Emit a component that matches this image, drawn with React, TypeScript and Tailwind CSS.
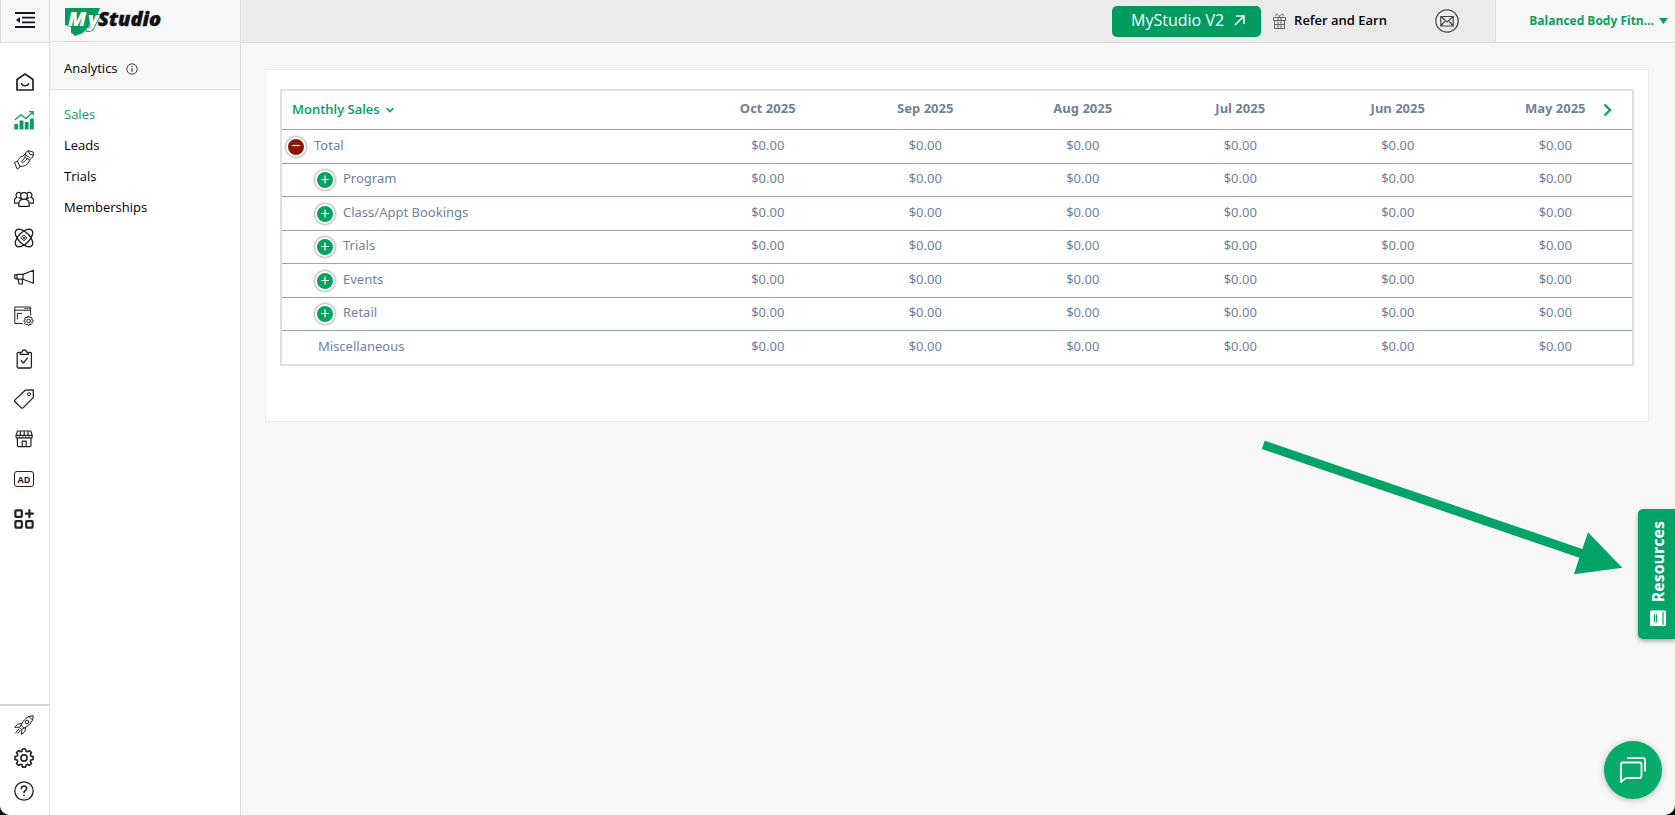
import type { ReactNode } from "react";

const months = ["Oct 2025", "Sep 2025", "Aug 2025", "Jul 2025", "Jun 2025", "May 2025"];

type Row = { label: string; kind: "total" | "group" | "leaf" };

const rows: Row[] = [
  { label: "Total", kind: "total" },
  { label: "Program", kind: "group" },
  { label: "Class/Appt Bookings", kind: "group" },
  { label: "Trials", kind: "group" },
  { label: "Events", kind: "group" },
  { label: "Retail", kind: "group" },
  { label: "Miscellaneous", kind: "leaf" },
];

const menu = ["Sales", "Leads", "Trials", "Memberships"];

function Icon({ children, width = 1.2 }: { children: ReactNode; width?: number }) {
  return (
    <svg
      viewBox="0 0 20 20"
      className="size-5"
      fill="none"
      stroke="currentColor"
      strokeWidth={width}
      strokeLinecap="round"
      strokeLinejoin="round"
      aria-hidden="true"
    >
      {children}
    </svg>
  );
}

const HomeIcon = (
  <Icon width={1.7}>
    <path d="M3 18V7.500L11 2l8 5.500V18Z" />
    <path d="M7.500 11.800c1.500 2.600 5.500 2.600 7 0" />
  </Icon>
);

const ChartIcon = (
  <svg viewBox="0 0 20 20" className="size-5 text-[#0a9d5f]" fill="currentColor" aria-hidden="true">
    <rect x="0.3" y="13" width="3.8" height="5.500" rx="0.6" />
    <rect x="5.500" y="9.500" width="4" height="9" rx="0.6" />
    <rect x="10.800" y="11" width="3.800" height="7.500" rx="0.6" />
    <rect x="16" y="7.500" width="3.800" height="11" rx="0.6" />
    <path d="M0.8 9 7 3.800l5 3.800 6.800-6.600M15 .6h4.200v4" fill="none" stroke="currentColor" strokeWidth="1.200" />
  </svg>
);

const HandIcon = (
  <Icon width={1}>
    <path d="m0.8 12.400 2.600-1.200 2.800 5.600-2.600 2.200ZM3.600 11.400c1-3 2.600-4.800 5-5.200l3.400-3M6 16.400c4.200.2 6.200-1 8.200-3.400l1.600-3.200" />
    <path d="m12 2.400 2.400-1.800 5 1.600-.4 4.600-3.400 3-4.400-2.400ZM14.400.8l1.200 3.200 3.600 1.200M11.200 7.400l-3.800 4.200c.8 1.200 2.400.6 4.200-1.200l1.600-1.600M12.400 5.400l3 2" />
  </Icon>
);

const GroupIcon = (
  <Icon width={1.3}>
    <circle cx="10" cy="7" r="3.400" />
    <path d="M4.800 17.400v-2.600c0-2.400 1.600-3.800 3.400-4.400M15.200 17.400v-2.600c0-2.400-1.600-3.800-3.400-4.400M4.800 17.400h10.400" />
    <path d="M6.600 4a2.700 2.700 0 1 0-3.600 4.200C1.400 9 .4 10.400.4 12v2.200h3.800M13.400 4a2.700 2.700 0 1 1 3.600 4.200c1.600.8 2.600 2.200 2.600 3.800v2.200h-3.800M5 8.600c.6.200 1 .6 1.400 1M15 8.600c-.6.200-1 .6-1.400 1" />
  </Icon>
);

const AtomIcon = (
  <Icon width={1.3}>
    <ellipse cx="10" cy="10" rx="11" ry="5.600" transform="rotate(45 10 10)" />
    <ellipse cx="10" cy="10" rx="11" ry="5.600" transform="rotate(-45 10 10)" />
    <path d="m10 7.200 2.800 2.800-2.800 2.800L7.200 10ZM10 9v2M9 10h2" strokeWidth="1" />
  </Icon>
);

const MegaphoneIcon = (
  <Icon width={1.2}>
    <path d="M3 7.400h6l10.400-4.200v13L9 12.200H3ZM3 7.800H.8v3.800H3M9 7.400v4.800M4.200 12.400l.8 4.600h3.400v-4.600" />
  </Icon>
);

const BrowserIcon = (
  <Icon width={1}>
    <path d="M8.400 17.400H.8V1h15.800v7.800M.8 4.200h15.800M3.400 13V7.400h4.200M11 2.600h.6M13 2.600h.6M15 2.600h.4" />
    <circle cx="14.600" cy="15" r="1.800" />
    <path d="m14 10.400h1.200l.5 1.300 1.500-.6 1 1-.6 1.400 1.400.6v1.500l-1.400.6.6 1.400-1 1-1.500-.6-.5 1.300h-1.200l-.6-1.300-1.500.6-1-1 .6-1.400-1.400-.6v-1.500l1.400-.6-.6-1.400 1-1 1.500.6Z" />
  </Icon>
);

const ClipboardIcon = (
  <Icon width={1.3}>
    <path d="M6.200 3.400H4.400c-.8 0-1.200.4-1.200 1.200v13.200c0 .8.4 1.200 1.200 1.200h11.800c.8 0 1.200-.4 1.200-1.200V4.600c0-.8-.4-1.200-1.200-1.200h-1.800" />
    <path d="M6.200 5.400c0-1.800.6-2.600 2-2.600.4-2.400 3.800-2.400 4.200 0 1.400 0 2 .8 2 2.600ZM7.200 11.800l2.200 2.200 4-4.800" />
  </Icon>
);

const TagIcon = (
  <Icon width={1.3}>
    <path d="M11.200 1.200 19.200.8l.2 7.600-10 10.200c-.8.8-1.600.8-2.400 0L1.200 13c-.8-.8-.8-1.600 0-2.400Z" />
    <circle cx="15" cy="5.200" r="1.500" strokeWidth="1" />
  </Icon>
);

const StoreIcon = (
  <Icon width={1.2}>
    <path d="M3.600 2h13.200l1.400 4.400v1.400c0 1-.8 1.400-1.600 1.400s-1.600-.4-1.600-1.400c0 1-.8 1.400-1.600 1.400s-1.600-.4-1.600-1.400c0 1-.8 1.400-1.600 1.400s-1.600-.4-1.600-1.400c0 1-.8 1.400-1.600 1.400s-1.600-.4-1.600-1.400c0 1-.8 1.400-1.600 1.400S2 8.800 2 7.800V6.400ZM2.200 6.400h16M6.400 2.200v3.800M10.200 2.200v3.800M14 2.200v3.800M3.400 9.600v6.800c0 .8.4 1.200 1.200 1.200h11.200c.8 0 1.200-.4 1.200-1.200V9.600M8.200 17.400V12.200h4v5.200" />
  </Icon>
);

const AdIcon = (
  <span className="flex h-4 w-5 items-center justify-center rounded-[3px] border border-[#222] text-[9px] font-bold leading-none">
    AD
  </span>
);

const AppsIcon = (
  <Icon width={2.2}>
    <rect x="1.400" y="1.400" width="6.400" height="6.400" rx="0.800" />
    <rect x="1.400" y="12.200" width="6.400" height="6.400" rx="0.800" />
    <rect x="12.200" y="12.200" width="6.400" height="6.400" rx="0.800" />
    <path d="M15.400 1.200v7M11.900 4.700h7" />
  </Icon>
);

const RocketIcon = (
  <Icon width={1}>
    <path d="M7.200 9.800C9.400 5 13 1.200 19.200.8c-.2 6.200-4 9.800-9 12.200ZM15.200 1.800l3 3M7.800 8.600l-4 .4L.8 12.400l4.400-.2M11.600 12.400l-.6 4-3.400 3 .2-4.600M7.200 9.800l-1.600 3 1.800 1.800 2.800-1.600M4.800 14.200 1.600 18M6 15.600l-2 2.600" />
    <circle cx="13" cy="7" r="1.800" />
  </Icon>
);

const GearIcon = (
  <Icon width={1.6}>
    <circle cx="10" cy="10" r="3.100" />
    <path d="M8.500 1h3l.6 2.300 1.300.5 2.100-1.200 2 2-1.200 2.100.6 1.400 2.200.5v2.900l-2.300.6-.5 1.300 1.200 2.100-2 2-2.100-1.200-1.300.6-.6 2.200h-3l-.6-2.300-1.300-.5-2.100 1.200-2-2 1.200-2.100-.6-1.300L1 11.500v-3l2.200-.5.6-1.400-1.300-2.100 2.100-2 2.100 1.200 1.200-.5Z" />
  </Icon>
);

const HelpIcon = (
  <Icon width={1.3}>
    <circle cx="10" cy="10" r="9.200" />
    <path d="M7.400 7.600c0-3.400 5.200-3.400 5.200-.2 0 2-2.600 2-2.600 4.200M10 14.400v.4" strokeWidth="1.600" />
  </Icon>
);

const railTop: [string, ReactNode][] = [
  ["Home", HomeIcon],
  ["Analytics", ChartIcon],
  ["Payments", HandIcon],
  ["Customers", GroupIcon],
  ["Programs", AtomIcon],
  ["Marketing", MegaphoneIcon],
  ["Website", BrowserIcon],
];

const railMiddle: [string, ReactNode][] = [
  ["Tasks", ClipboardIcon],
  ["Offers", TagIcon],
  ["Retail", StoreIcon],
  ["Ads", AdIcon],
  ["Apps", AppsIcon],
];

const railBottom: [string, ReactNode][] = [
  ["Launch", RocketIcon],
  ["Settings", GearIcon],
  ["Help", HelpIcon],
];

function Logo() {
  return (
    <svg viewBox="0 -4 110 38" className="h-[38px] w-[110px] shrink-0" role="img" aria-label="MyStudio">
      <path d="M1 1h35l-3 8-7 6c-1 5-4 9-8 11.500L11 29l-4-3.500V20L1 18Z" fill="#079a5c" />
      <g fontFamily="'Open Sans', 'Noto Sans', sans-serif" fontWeight="800" fontStyle="italic">
        <text x="4" y="19" fontSize="20" fill="#fff">M</text>
        <text x="24" y="19" fontSize="20" fill="#fff" stroke="#079a5c" strokeWidth="2" paintOrder="stroke">y</text>
        <text x="34" y="19" fontSize="20" fill="#111" stroke="#111" strokeWidth="0.4">Studio</text>
      </g>
    </svg>
  );
}

function Toggle({ open, label }: { open: boolean; label: string }) {
  return (
    <button
      type="button"
      aria-label={(open ? "Collapse " : "Expand ") + label}
      className={
        "flex size-5 items-center justify-center rounded-full border-2 border-white shadow-[0_0_2px_1px_#b5b5b5] " +
        (open ? "bg-[#8b1503]" : "bg-[#06a261]")
      }
    >
      <svg viewBox="0 0 10 10" className="size-[10px]" stroke="#fff" strokeWidth="1.2" aria-hidden="true">
        <path d={open ? "M1 3.500h8" : "M1 4.500h8M5 .5v8"} />
      </svg>
    </button>
  );
}

function RailLink({ label, children, height }: { label: string; children: ReactNode; height: string }) {
  return (
    <a href="#" aria-label={label} className={"flex items-center justify-center pr-px text-[#222] " + height}>
      {children}
    </a>
  );
}

export default function App() {
  return (
    <div className="min-h-screen bg-black font-['Open_Sans','Noto_Sans',sans-serif]">
      <div className="relative flex min-h-screen overflow-hidden rounded-b-[10px] bg-[#f7f7f7]">
        <nav aria-label="Main" className="flex w-[50px] shrink-0 flex-col border-r border-[#dcdee2] bg-white">
          <button
            type="button"
            aria-label="Toggle menu"
            className="flex h-[43px] items-center justify-center border-b border-l border-[#dcdee2] bg-[#f7f7f7] pb-[3px]"
          >
            <svg viewBox="0 0 20 16" className="h-4 w-5" stroke="#161a26" strokeWidth="1.8" aria-hidden="true">
              <path d="M0 1h20M7 5.700h13M7 10.300h13M0 15h20" />
              <path d="M1 8l4-3v6Z" fill="#161a26" stroke="none" />
            </svg>
          </button>
          <div className="flex flex-col pt-[19px]">
            {railTop.map(([label, icon]) => (
              <RailLink key={label} label={label} height="h-[39px]">{icon}</RailLink>
            ))}
          </div>
          <div className="flex flex-col pt-1">
            {railMiddle.map(([label, icon]) => (
              <RailLink key={label} label={label} height="h-10">{icon}</RailLink>
            ))}
          </div>
          <div className="mt-auto flex flex-col border-t-2 border-[#d6d6d6] pt-[2px] pb-2">
            {railBottom.map(([label, icon]) => (
              <RailLink key={label} label={label} height="h-[33px]">{icon}</RailLink>
            ))}
          </div>
        </nav>

        <aside className="flex w-[191px] shrink-0 flex-col border-r border-[#dcdee2] bg-white">
          <div className="flex h-[42px] items-center border-b border-[#dcdee2] bg-[#f7f7f7] pt-[3px] pl-[14px]">
            <Logo />
          </div>
          <h1 className="flex h-12 items-center gap-2 border-b border-[#dcdee2] bg-[#f7f7f7] pt-[6px] pl-[14px] text-[13px] text-black">
            Analytics
            <svg viewBox="0 0 12 12" className="size-3" fill="none" stroke="#444" aria-hidden="true">
              <circle cx="6" cy="6" r="5.200" />
              <path d="M6 5.200v3.500M6 3v1.200" strokeWidth="1.2" />
            </svg>
          </h1>
          <ul className="flex flex-col gap-[11px] pt-[14px] pl-[14px] text-[13px] leading-5">
            {menu.map((item, i) => (
              <li key={item}>
                <a href="#" className={i === 0 ? "text-[#0a9d5f]" : "text-black"}>{item}</a>
              </li>
            ))}
          </ul>
        </aside>

        <div className="flex min-w-0 grow flex-col">
          <header className="flex h-[43px] items-stretch justify-end border-b border-[#dcdee2] bg-[#ebebeb]">
            <div className="flex items-center">
              <button
                type="button"
                className="flex h-[31px] items-center gap-[10px] rounded-[5px] bg-[#009b5f] pr-4 pb-[2px] pl-[19px] text-base font-medium text-white"
              >
                MyStudio V2
                <svg viewBox="0 0 11 11" className="size-[11px]" fill="none" stroke="#e6fff4" strokeWidth="1.6" aria-hidden="true">
                  <path d="M1 10 10 1M2 1h8v8" />
                </svg>
              </button>
              <a href="#" className="ml-3 flex items-center gap-2 text-[13px] font-semibold text-black">
                <svg viewBox="0 0 13 16" className="h-4 w-[13px]" fill="none" stroke="#666" aria-hidden="true">
                  <path d="M.5 4.500h12v3H.5ZM1.500 7.500v8h10v-8M5 4.500v11M8 4.500v11M6.500 4C5 .2 2 .5 3 3.200M6.500 4C8 .2 11 .5 10 3.200M2 11.500h9" />
                </svg>
                Refer and Earn
              </a>
              <button type="button" aria-label="Messages" className="mr-9 ml-12">
                <svg viewBox="0 0 24 24" className="size-6" fill="none" stroke="#444" strokeWidth="1.2" aria-hidden="true">
                  <circle cx="12" cy="12" r="11.200" />
                  <path d="M5.800 7.500h12.400v9.500H5.800ZM6 7.800l6 5.200 6-5.200M6 16.700l3.800-4.200M18 16.700l-3.800-4.200" />
                </svg>
              </button>
            </div>
            <button
              type="button"
              className="flex w-[180px] items-center justify-end gap-[5px] border-l border-[#dcdee2] bg-[#f7f7f7] pr-[7px] text-xs font-bold text-[#0a9d5f]"
            >
              Balanced Body Fitn...
              <svg viewBox="0 0 9 6" className="h-[6px] w-[9px]" fill="currentColor" aria-hidden="true">
                <path d="M0 0h9L4.500 6Z" />
              </svg>
            </button>
          </header>

          <main className="px-6 pt-[26px]">
            <section className="mr-[2px] border border-[#e9ebee] bg-white px-[14px] pt-[19px] pb-[55px]">
              <table className="w-full table-fixed border-separate border-spacing-0 border-2 border-[#dae0e6] font-['Noto_Sans','Open_Sans',sans-serif] text-[13px] text-[#6e829c]">
                <thead>
                  <tr className="h-[39px]">
                    <th scope="col" className="w-[30%] border-b border-[#93a4b8] p-0 pl-[10px] text-left">
                      <label className="inline-flex items-center gap-[6px] text-[#0a9d5f]">
                        <select
                          aria-label="Report"
                          className="appearance-none bg-transparent font-['Open_Sans','Noto_Sans',sans-serif] text-[13px] font-semibold outline-none"
                        >
                          <option>Monthly Sales</option>
                        </select>
                        <svg viewBox="0 0 8 6" className="h-[6px] w-2" fill="none" stroke="currentColor" strokeWidth="1.6" aria-hidden="true">
                          <path d="m.6 1 3.400 3.600L7.400 1" />
                        </svg>
                      </label>
                    </th>
                    {months.map((month, i) => (
                      <th key={month} scope="col" className="relative border-b border-[#93a4b8] p-0 pb-[2px] pl-1 font-bold">
                        {month}
                        {i === months.length - 1 && (
                          <button type="button" aria-label="Next months" className="absolute top-3 right-5 text-[#0aa565]">
                            <svg viewBox="0 0 9 14" className="h-[14px] w-[9px]" fill="none" stroke="currentColor" strokeWidth="2.4" aria-hidden="true">
                              <path d="m1.500 1.500 5.500 5.500-5.500 5.500" />
                            </svg>
                          </button>
                        )}
                      </th>
                    ))}
                  </tr>
                </thead>
                <tbody>
                  {rows.map(({ label, kind }) => (
                    <tr key={label} className="h-[34px] even:h-[33px] last:h-[33px] [&:last-child>*]:border-b-0">
                      <th scope="row" className="border-b border-[#93a4b8] p-0 text-left font-normal">
                        <div
                          className={
                            "flex items-center gap-2 " +
                            (kind === "total" ? "pl-1" : kind === "group" ? "pl-[33px]" : "pl-9")
                          }
                        >
                          {kind !== "leaf" && <Toggle open={kind === "total"} label={label} />}
                          <span className="pb-[2px]">{label}</span>
                        </div>
                      </th>
                      {months.map((month) => (
                        <td key={month} className="border-b border-[#93a4b8] p-0 pb-[2px] pl-1 text-center">$0.00</td>
                      ))}
                    </tr>
                  ))}
                </tbody>
              </table>
            </section>
          </main>
        </div>

        <svg viewBox="0 0 365 140" className="pointer-events-none absolute top-[438px] right-[50px] h-[140px] w-[365px]" aria-hidden="true">
          <path d="M4.700 2.700 1.700 11l317.600 108.700-5.300 16.600 48.300-6.600L328 94.300l-5.700 16.700Z" fill="#04a367" />
        </svg>

        <button
          type="button"
          className="absolute top-[509px] right-0 flex h-[130px] w-[37px] items-center justify-center rounded-l-[5px] bg-[#04a367] pl-[2px] text-base font-bold text-white shadow-[0_2px_4px_rgba(0,0,0,0.35)]"
        >
          <span className="flex rotate-180 items-center gap-2 [writing-mode:vertical-rl]">
            <svg viewBox="0 0 16 16" className="size-4" aria-hidden="true">
              <rect width="16" height="16" rx="1.500" fill="#fff" />
              <path d="M3 1.500v13" stroke="#04a367" strokeWidth="1.2" />
              <path d="M9.500 4v8M11.500 4v8" stroke="#04a367" strokeWidth="1.2" />
            </svg>
            Resources
          </span>
        </button>

        <button
          type="button"
          aria-label="Open chat"
          className="absolute right-[13px] bottom-4 flex size-[58px] items-center justify-center rounded-full bg-[#05ab68] shadow-[0_1px_6px_rgba(0,0,0,0.25)]"
        >
          <svg viewBox="0 0 26 26" className="size-[26px]" fill="none" stroke="#fff" strokeWidth="1.8" strokeLinejoin="round" aria-hidden="true">
            <path d="M3 5.500h16.500q2 0 2 2V19q0 2-2 2H6L1 25V7.500q0-2 2-2Z" />
            <path d="M7 1.200h16q2 0 2 2V14.500" />
          </svg>
        </button>
      </div>
    </div>
  );
}
